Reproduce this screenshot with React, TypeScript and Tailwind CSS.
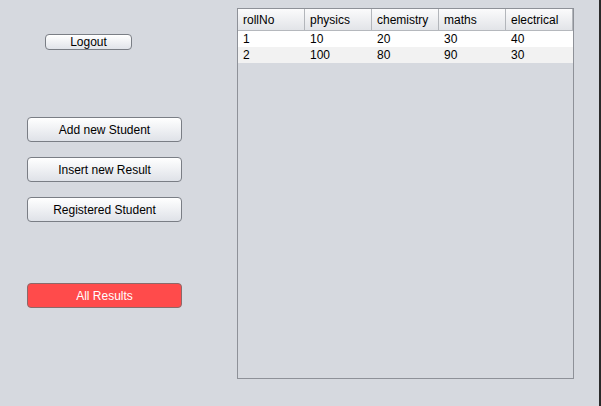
import React from "react";

const columns = ["rollNo", "physics", "chemistry", "maths", "electrical"];
const rows = [
  ["1", "10", "20", "30", "40"],
  ["2", "100", "80", "90", "30"],
];

function SwingButton({ label, className }: { label: string; className: string }) {
  return (
    <button
      className={
        "flex items-center justify-center rounded-[4px] border border-[#7a7e85] text-[12px] leading-none shadow-[inset_0_1px_0_#ffffff] " +
        className
      }
    >
      {label}
    </button>
  );
}

export default function App() {
  return (
    <div
      className="flex w-[601px] h-[406px] bg-[#d6d9df] overflow-hidden text-black"
      style={{ fontFamily: '"Liberation Sans", Arial, sans-serif' }}
    >
      <div className="flex flex-col w-[237px] pl-[27px]">
        <SwingButton
          label="Logout"
          className="mt-[34px] ml-[18px] w-[87px] h-[16px] bg-gradient-to-b from-[#ffffff] to-[#e1e4ea]"
        />
        <SwingButton
          label="Add new Student"
          className="mt-[67px] w-[155px] h-[25px] bg-gradient-to-b from-[#ffffff] to-[#dfe2e8]"
        />
        <SwingButton
          label="Insert new Result"
          className="mt-[15px] w-[155px] h-[25px] bg-gradient-to-b from-[#ffffff] to-[#dfe2e8]"
        />
        <SwingButton
          label="Registered Student"
          className="mt-[15px] w-[155px] h-[25px] bg-gradient-to-b from-[#ffffff] to-[#dfe2e8]"
        />
        <SwingButton
          label="All Results"
          className="mt-[61px] w-[155px] h-[25px] bg-[#ff4b4b] text-white shadow-none border-[#8a6a6a]"
        />
      </div>

      <div className="pt-[8px]">
        <div className="w-[337px] h-[371px] border border-[#8e9198] flex flex-col">
          <div className="flex h-[22px] border-b border-[#b5b8bd] bg-gradient-to-b from-[#fbfbfc] to-[#e2e4e8]">
            {columns.map((c) => (
              <div
                key={c}
                className="w-[67px] shrink-0 border-r border-[#b3b6bb] px-[5px] flex items-center text-[12px]"
              >
                {c}
              </div>
            ))}
          </div>
          {rows.map((r, i) => (
            <div
              key={i}
              className={"flex h-[16px] w-[335px] " + (i % 2 === 0 ? "bg-white" : "bg-[#f2f2f2]")}
            >
              {r.map((v, j) => (
                <div key={j} className="w-[67px] shrink-0 px-[5px] flex items-center text-[12px]">
                  {v}
                </div>
              ))}
            </div>
          ))}
        </div>
      </div>

      <div className="ml-auto w-[2px] h-full bg-[#2a2a2a]" />
    </div>
  );
}
